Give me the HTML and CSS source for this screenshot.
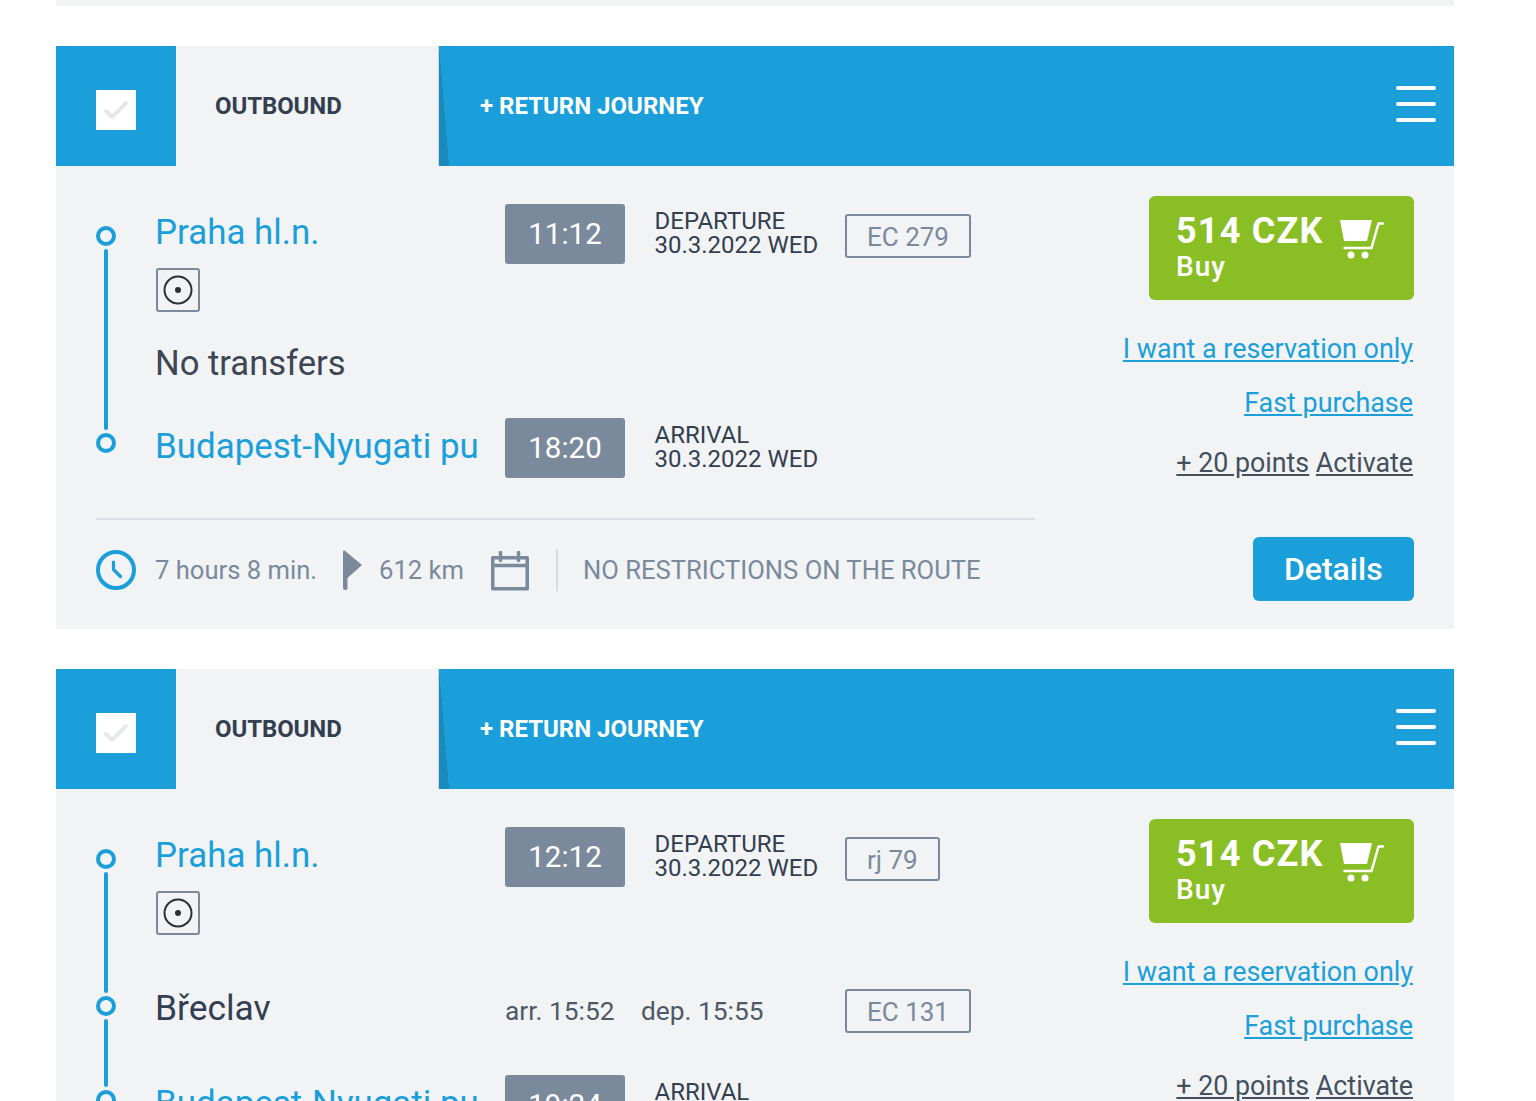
FILE: index.html
```html
<!DOCTYPE html>
<html lang="en">
<head>
<meta charset="utf-8">
<title>Connections</title>
<link rel="stylesheet" href="styles.css">
</head>
<body>
<div class="stage">
  <div class="strip"></div>

  <section class="card">
    <header class="head">
      <div class="check-cell"><span class="check"><svg viewBox="0 0 40 40" width="40" height="40"><path d="M10 21l6 6 14-14" fill="none" stroke="#e6e8ea" stroke-width="4" stroke-linecap="round" stroke-linejoin="round"/></svg></span></div>
      <div class="tab">OUTBOUND</div>
      <div class="return"><span>+ RETURN JOURNEY</span>
        <div class="burger"><i></i><i></i><i></i></div>
      </div>
    </header>
    <div class="body">
      <div class="left">
        <div class="route">
          <div class="rail"><span class="dot"></span><span class="line line-a"></span><span class="dot"></span></div>
          <div class="stops">
            <div class="stop stop-first">
              <div class="name-cell">
                <div class="name">Praha hl.n.</div>
                <span class="svc"><svg viewBox="0 0 44 44" width="44" height="44"><circle cx="22" cy="22" r="13.5" fill="none" stroke="#2b2f36" stroke-width="2"/><circle cx="22" cy="22" r="3" fill="#2b2f36"/></svg></span>
                <div class="transfers">No transfers</div>
              </div>
              <div class="time">11:12</div>
              <div class="info">DEPARTURE<br>30.3.2022 WED</div>
              <div class="tag">EC 279</div>
            </div>
            <div class="stop">
              <div class="name-cell"><div class="name">Budapest-Nyugati pu</div></div>
              <div class="time">18:20</div>
              <div class="info">ARRIVAL<br>30.3.2022 WED</div>
            </div>
          </div>
        </div>
        <div class="facts">
          <svg class="ic" viewBox="0 0 40 40" width="40" height="40"><circle cx="20" cy="20" r="18" fill="none" stroke="#1a9fda" stroke-width="4"/><path d="M17.500 12v7.500l7 7" fill="none" stroke="#1a9fda" stroke-width="3.2" stroke-linecap="round" stroke-linejoin="round"/></svg>
          <span class="fact fact-time">7 hours 8 min.</span>
          <svg class="ic ic-flag" viewBox="0 0 20 40" width="20" height="40"><path d="M0 1.500Q0 0 1.500 .5L19 15 4.500 28v10q0 2-2.250 2T0 38z" fill="#7a8a9c"/></svg>
          <span class="fact fact-km">612 km</span>
          <svg class="ic ic-cal" viewBox="0 0 40 40" width="40" height="40"><path d="M2.750 6.750h34.500v31H2.750zM2.750 14.500h34.500M10.500 1.500v8M28.500 1.500v8" fill="none" stroke="#7a8a9c" stroke-width="3.5" stroke-linejoin="round" stroke-linecap="round"/></svg>
          <span class="sep"></span>
          <span class="fact">NO RESTRICTIONS ON THE ROUTE</span>
        </div>
      </div>
      <aside class="right">
        <a class="buy"><span class="buy-text"><b>514 CZK</b><em>Buy</em></span>
          <svg viewBox="0 0 44 40" width="44" height="40"><path d="M0 1h32l-5 21H4z" fill="#fff"/><path d="M43 4.500h-4.500L31.500 29H4.500" fill="none" stroke="#fff" stroke-width="2.500" stroke-linecap="round" stroke-linejoin="round"/><circle cx="11" cy="36" r="3.500" fill="#fff"/><circle cx="25" cy="36" r="3.500" fill="#fff"/></svg>
        </a>
        <a class="link link-res">I want a reservation only</a>
        <a class="link link-fast">Fast purchase</a>
        <div class="points"><a>+ 20 points</a> <a>Activate</a></div>
        <a class="details">Details</a>
      </aside>
    </div>
  </section>

  <section class="card">
    <header class="head">
      <div class="check-cell"><span class="check"><svg viewBox="0 0 40 40" width="40" height="40"><path d="M10 21l6 6 14-14" fill="none" stroke="#e6e8ea" stroke-width="4" stroke-linecap="round" stroke-linejoin="round"/></svg></span></div>
      <div class="tab">OUTBOUND</div>
      <div class="return"><span>+ RETURN JOURNEY</span>
        <div class="burger"><i></i><i></i><i></i></div>
      </div>
    </header>
    <div class="body">
      <div class="left">
        <div class="route">
          <div class="rail"><span class="dot"></span><span class="line line-b"></span><span class="dot"></span><span class="line line-c"></span><span class="dot"></span></div>
          <div class="stops">
            <div class="stop">
              <div class="name-cell">
                <div class="name">Praha hl.n.</div>
                <span class="svc"><svg viewBox="0 0 44 44" width="44" height="44"><circle cx="22" cy="22" r="13.5" fill="none" stroke="#2b2f36" stroke-width="2"/><circle cx="22" cy="22" r="3" fill="#2b2f36"/></svg></span>
              </div>
              <div class="time">12:12</div>
              <div class="info">DEPARTURE<br>30.3.2022 WED</div>
              <div class="tag">rj 79</div>
            </div>
            <div class="stop stop-via">
              <div class="via-name">Břeclav</div>
              <div class="via-times"><span>arr. 15:52</span><span>dep. 15:55</span></div>
              <div class="tag tag-via">EC 131</div>
            </div>
            <div class="stop">
              <div class="name-cell"><div class="name">Budapest-Nyugati pu</div></div>
              <div class="time">19:24</div>
              <div class="info">ARRIVAL<br>30.3.2022 WED</div>
            </div>
          </div>
        </div>
      </div>
      <aside class="right">
        <a class="buy"><span class="buy-text"><b>514 CZK</b><em>Buy</em></span>
          <svg viewBox="0 0 44 40" width="44" height="40"><path d="M0 1h32l-5 21H4z" fill="#fff"/><path d="M43 4.500h-4.500L31.500 29H4.500" fill="none" stroke="#fff" stroke-width="2.500" stroke-linecap="round" stroke-linejoin="round"/><circle cx="11" cy="36" r="3.500" fill="#fff"/><circle cx="25" cy="36" r="3.500" fill="#fff"/></svg>
        </a>
        <a class="link link-res">I want a reservation only</a>
        <a class="link link-fast">Fast purchase</a>
        <div class="points"><a>+ 20 points</a> <a>Activate</a></div>
      </aside>
    </div>
  </section>
</div>
</body>
</html>
```

FILE: styles.css
```css
* { box-sizing: border-box; }
html, body { margin: 0; background: #fff; }
body { font-family: Roboto, "Liberation Sans", sans-serif; color: #333f50; }
.stage { width: 1536px; height: 1101px; overflow: hidden; padding-left: 56px; }
.strip { width: 1398px; height: 6px; background: #f1f3f5; }
.card { width: 1398px; margin-top: 40px; background: #f1f3f5; }

.head { display: flex; height: 120px; background: #1a9fda; }
.check-cell { width: 120px; display: flex; align-items: center; justify-content: center; }
.check { width: 40px; height: 40px; background: #fff; display: block; margin-top: 8px; }
.check svg { display: block; }
.tab { width: 262px; background: #f1f3f5; display: flex; align-items: center; padding-left: 39px; font-size: 24px; font-weight: 700; letter-spacing: -.1px; color: #333f50; }
.return { flex: 1; display: flex; align-items: center; justify-content: space-between; padding: 0 18px 0 41px; color: #fff; font-size: 24px; font-weight: 700; background-image: linear-gradient(to top right, #1a8abd 50%, transparent 50.5%); background-size: 10px 120px; background-repeat: no-repeat; border-left: 1px solid #cfd5da; }
.burger { display: flex; flex-direction: column; gap: 12px; width: 40px; margin-top: -4px; }
.burger i { display: block; height: 4px; background: #fff; border-radius: 2px; }

.body { display: flex; padding: 30px 40px 0; }
.left { width: 939px; }
.route { display: flex; margin-top: 8px; }
.rail { width: 60px; flex: none; display: flex; flex-direction: column; padding-top: 22px; }
.dot { width: 20px; height: 20px; flex: none; border: 4px solid #1a9fda; border-radius: 50%; }
.line { width: 4px; margin: 3px 0 3px 8px; background: #1a9fda; border-radius: 2px; flex: none; }
.line-a { height: 181px; }
.line-b { height: 121px; }
.line-c { height: 68px; }
.stops { flex: 1; }
.stop { display: grid; grid-template-columns: 349px 120px 220px auto; align-items: start; justify-content: start; }
.stop-first { margin-bottom: 35px; }
.name { font-size: 34.9px; line-height: 57px; letter-spacing: .02px; color: #1a9fda; white-space: nowrap; margin-left: -1px; }
.svc { display: block; width: 44px; height: 44px; margin-top: 7px; border: 2px solid #7a8a9c; border-radius: 3px; }
.svc svg { display: block; margin: -2px; }
.transfers { font-size: 34.6px; line-height: 40px; margin-top: 31px; margin-left: -1px; color: #3c4654; }
.time { height: 60px; background: #7a8a9c; border-radius: 3px; color: #fff; font-size: 29.500px; line-height: 60px; text-align: center; }
.info { padding-left: 29.5px; padding-top: 5px; font-size: 24px; line-height: 24px; white-space: nowrap; }
.tag { justify-self: start; height: 44px; margin-top: 10px; padding: 0 20px; border: 2px solid #7a8a9c; border-radius: 3px; font-size: 26px; line-height: 42px; color: #7a8a9c; white-space: nowrap; }

.stop-via { margin: 53px 0 41px; grid-template-columns: 349px 340px auto; align-items: center; }
.via-name { font-size: 35.4px; line-height: 40px; color: #333f50; margin-bottom: 6px; margin-left: -1px; }
.via-times { display: flex; gap: 26.5px; font-size: 26.3px; line-height: 40px; color: #4e5967; }
.tag-via { margin-top: 0; }

.facts { display: flex; align-items: center; margin-top: 40px; padding: 29px 0 38px; border-top: 2px solid #d8dee3; }
.ic { flex: none; display: block; }
.fact { font-size: 25.6px; line-height: 40px; color: #7a8a9c; white-space: nowrap; }
.fact-time { margin-left: 19px; }
.ic-flag { margin-left: 26px; }
.fact-km { margin-left: 16px; }
.ic-cal { margin-left: 26px; margin-top: 2px; }
.sep { width: 2px; height: 42px; margin: 0 25px 0 26px; background: #d5dbe0; flex: none; }

.right { flex: 1; display: flex; flex-direction: column; align-items: flex-end; }
.buy { width: 265px; height: 104px; background: #89bf25; border-radius: 6px; display: flex; justify-content: space-between; padding: 17px 30px 0 27px; color: #fff; }
.buy svg { margin-top: 6px; flex: none; }
.buy-text { display: flex; flex-direction: column; }
.buy b { font-size: 36px; line-height: 36px; font-weight: 700; letter-spacing: 1.2px; white-space: nowrap; }
.buy em { font-style: normal; font-weight: 500; font-size: 28px; line-height: 36px; letter-spacing: 1px; }
.link { font-size: 26.9px; line-height: 34px; color: #1a9fda; text-decoration: underline; white-space: nowrap; margin-right: 1px; }
.link-res { margin-top: 32px; }
.link-fast { margin-top: 20px; }
.points { margin-top: 26px; margin-right: 1px; font-size: 26.8px; line-height: 34px; color: #45505e; white-space: nowrap; }
.points a { text-decoration: underline; }
.details { width: 161.5px; height: 64px; margin-top: 57px; background: #1a9fda; border-radius: 6px; color: #fff; font-size: 32px; font-weight: 500; line-height: 64px; text-align: center; }
```
